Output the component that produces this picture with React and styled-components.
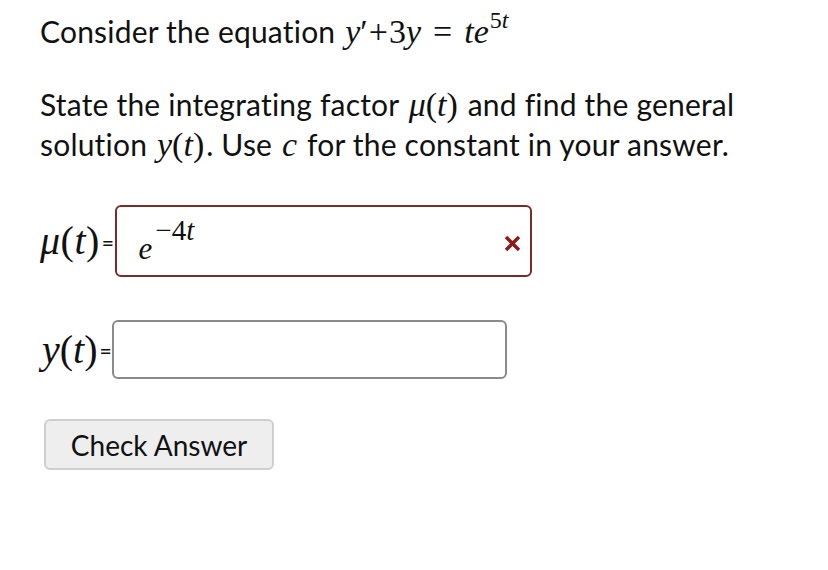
import styled, { createGlobalStyle } from "styled-components";

const GlobalStyle = createGlobalStyle`
  body {
    margin: 0;
    background: #fff;
    font-family: "Lato", "Open Sans", sans-serif;
    color: #111;
  }
`;

const Page = styled.div`
  width: 828px;
  height: 570px;
  padding: 11px 40px 0;
  box-sizing: border-box;
`;

const Para = styled.p`
  margin: ${(p) => p.$margin || "0"};
  font-size: 30px;
  line-height: 40px;
  letter-spacing: 0.2px;
  font-variant-ligatures: none;
`;

const M = styled.span`
  font-family: "Liberation Serif", "DejaVu Serif", serif;
  font-style: italic;
  font-size: 34px;
  line-height: 0;
  letter-spacing: 0;
  margin: 0 2px;
`;

const Up = styled.span`
  font-style: normal;
`;

const Sup = styled.sup`
  font-size: 24px;
  vertical-align: 0;
  position: relative;
  top: -15px;
  margin-left: 1px;
`;

const Op = styled.span`
  font-style: normal;
  margin: 0 ${(p) => p.$gap || 1}px;
`;

const Row = styled.div`
  display: flex;
  align-items: center;
  margin: ${(p) => p.$margin || "0"};
`;

const Label = styled.span`
  display: flex;
  align-items: center;
  font-family: "Liberation Serif", serif;
  font-style: italic;
  font-size: 40px;
  line-height: 1;
  letter-spacing: ${(p) => p.$spread || 0}px;
`;

const Eq = styled.span`
  font-family: "Lato", sans-serif;
  font-style: normal;
  font-size: 21px;
  font-weight: 500;
  margin: 2px 0 0 2px;
`;

const Field = styled.div`
  display: flex;
  align-items: center;
  justify-content: space-between;
  box-sizing: border-box;
  width: ${(p) => p.$width}px;
  height: ${(p) => p.$height}px;
  border: ${(p) => (p.$wrong ? "2px solid #7b2a2a" : "2px solid #8a8a8a")};
  border-radius: 6px;
  padding: 0 9px 0 22px;
  background: #fff;
`;

const Answer = styled.span`
  font-family: "Liberation Serif", serif;
  font-style: italic;
  font-size: 31px;
  line-height: 1;
  margin-top: 14px;
`;

const AnswerSup = styled.sup`
  font-size: 29px;
  vertical-align: 0;
  position: relative;
  top: -19px;
  margin-left: 3px;
`;

const Cross = styled.svg`
  width: 17px;
  height: 17px;
  margin-top: 4px;
`;

const Button = styled.button`
  margin: 40px 0 0 4px;
  width: 230px;
  height: 51px;
  font-family: "Lato", sans-serif;
  font-size: 28px;
  color: #111;
  background: #eeeeee;
  border: 2px solid #cfcfcf;
  border-radius: 6px;
`;

export default function App() {
  return (
    <Page>
      <GlobalStyle />
      <Para>
        Consider the equation{" "}
        <M>
          y<Up>′</Up>
          <Op>+</Op>
          <Up>3</Up>y<Op $gap={12}>=</Op>te<Sup><Up>5</Up>t</Sup>
        </M>
      </Para>
      <Para $margin="33px 0 0">
        State the integrating factor <M>μ<Up>(</Up>t<Up>)</Up></M> and find the general
        <br />
        solution <M>y<Up>(</Up>t<Up>)</Up></M>. Use <M>c</M> for the constant in your answer.
      </Para>
      <Row $margin="41px 0 0">
        <Label $spread={0.5}>
          μ<Up>(</Up>t<Up>)</Up>
          <Eq>=</Eq>
        </Label>
        <Field $wrong $width={417} $height={72}>
          <Answer>
            e<AnswerSup><Up>−4</Up>t</AnswerSup>
          </Answer>
          <Cross viewBox="0 0 17 17">
            <path d="M2 2 L15 15 M15 2 L2 15" stroke="#8b1c1c" strokeWidth="3.4" />
          </Cross>
        </Field>
      </Row>
      <Row $margin="43px 0 0 2px">
        <Label>
          y<Up>(</Up>t<Up>)</Up>
          <Eq>=</Eq>
        </Label>
        <Field $width={395} $height={59} />
      </Row>
      <Button>Check Answer</Button>
    </Page>
  );
}
